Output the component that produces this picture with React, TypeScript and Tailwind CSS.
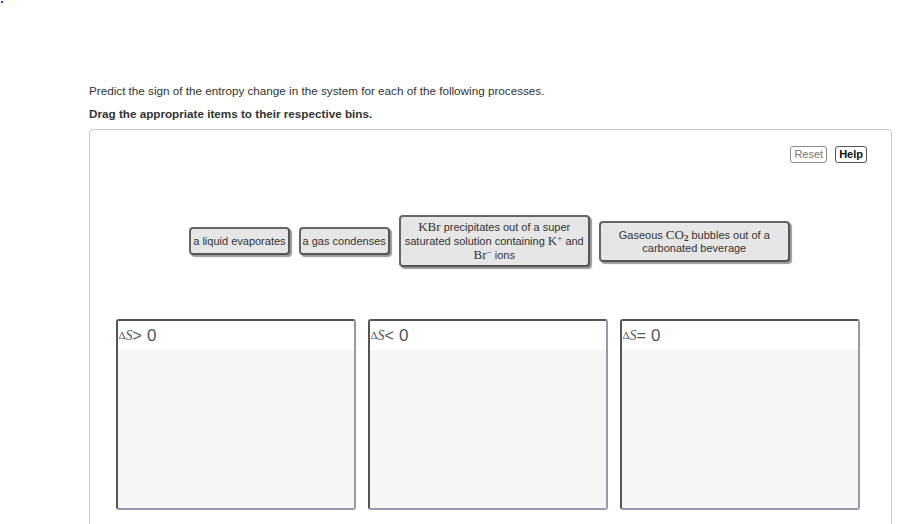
import React from 'react';

const font = { fontFamily: '"Liberation Sans", Arial, sans-serif' };
const serif = { fontFamily: '"Liberation Serif", "Times New Roman", serif' };

function Item({ children, className = '' }: { children: React.ReactNode; className?: string }) {
  return (
    <div
      className={`rounded-[4px] border-2 border-t-[#666] border-l-[#666] border-r-[#555] border-b-[#555] bg-[#e6e6e6] px-[2px] text-center text-[11px] text-[#333] shadow-[2px_2px_1px_#9a9a9a] ${className}`}
    >
      {children}
    </div>
  );
}

function Bin({ sign }: { sign: string }) {
  return (
    <div className="flex h-[191px] w-[240px] flex-col overflow-hidden rounded-[3px] border-2 border-l-[#555] border-t-[#555] border-r-[#9a98a8] border-b-[#9a98a8] bg-[#f6f6f6]">
      <div className="flex h-[29px] items-center bg-white pl-[1px] text-[#555]">
        <span className="text-[11px] leading-none" style={serif}>Δ</span>
        <span className="text-[14px] italic leading-none" style={serif}>S</span>
        <span className="text-[16px] leading-none">{sign}</span>
        <span className="ml-[5px] text-[17px] leading-none">0</span>
      </div>
    </div>
  );
}

export default function App() {
  return (
    <div className="min-h-[524px] bg-white" style={font}>
      <div className="ml-[1px] pt-[1px]">
        <div className="h-[2px] w-[2px] bg-[#3333ff]" />
      </div>
      <div className="px-[89px] pt-[81px]">
        <p className="text-[11.7px] leading-[14px] text-[#333]">
          Predict the sign of the entropy change in the system for each of the following processes.
        </p>
        <p className="mt-[9px] text-[11.7px] font-bold leading-[14px] text-[#333]">
          Drag the appropriate items to their respective bins.
        </p>

        <div className="mt-[8px] h-[420px] w-[803px] rounded-[4px] border border-[#c8c8c8]">
          <div className="flex justify-end gap-[8px] pr-[24px] pt-[16px]">
            <button className="rounded-[3px] border border-[#8a8a8a] bg-white px-[3px] text-[11px] leading-[15px] text-[#777]">
              Reset
            </button>
            <button className="rounded-[3px] border border-[#555] bg-white px-[3px] text-[11px] font-bold leading-[15px] text-[#111]">
              Help
            </button>
          </div>

          <div className="mt-[52px] flex items-center justify-center gap-[9px] pr-[2px]">
            <Item className="py-[5px] leading-[14px]">a liquid evaporates</Item>
            <Item className="py-[5px] leading-[14px]">a gas condenses</Item>
            <Item className="w-[191px] py-[3px] leading-[14px]">
              <span className="text-[13px]" style={serif}>KBr</span> precipitates out of a super
              <br />
              saturated solution containing <span className="text-[13px]" style={serif}>K<sup className="text-[9px]">+</sup></span> and
              <br />
              <span className="text-[13px]" style={serif}>Br<sup className="text-[9px]">−</sup></span> ions
            </Item>
            <Item className="w-[191px] py-[5px] leading-[13px]">
              Gaseous <span className="text-[13px]" style={serif}>CO<sub className="text-[9px] font-bold">2</sub></span> bubbles out of a
              <br />
              carbonated beverage
            </Item>
          </div>

          <div className="mt-[52px] flex justify-center gap-[12px] pr-[6px]">
            <Bin sign=">" />
            <Bin sign="<" />
            <Bin sign="=" />
          </div>
        </div>
      </div>
    </div>
  );
}
